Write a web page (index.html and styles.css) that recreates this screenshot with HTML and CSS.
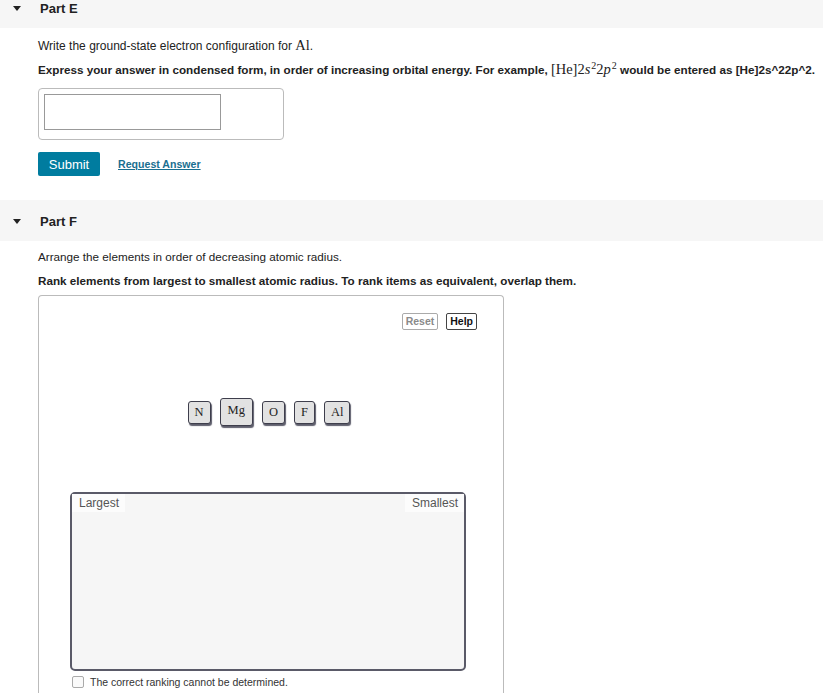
FILE: index.html
```html
<!DOCTYPE html>
<html>
<head>
<meta charset="utf-8">
<link rel="stylesheet" href="styles.css">
</head>
<body>
<section class="part part-first">
  <div class="part-head"><span class="caret"></span><span class="part-title">Part E</span></div>
  <div class="part-body">
    <p class="prompt">Write the ground-state electron configuration for <span class="math">Al</span>.</p>
    <p class="instr">Express your answer in condensed form, in order of increasing orbital energy. For example, <span class="math mb">[He]2<i>s</i><sup>2</sup>2<i>p</i><sup>2</sup></span> would be entered as [He]2s^22p^2.</p>
    <div class="answer-box"><div class="answer-input"></div></div>
    <div class="actions">
      <button class="submit">Submit</button>
      <a class="req" href="#">Request Answer</a>
    </div>
  </div>
</section>
<section class="part">
  <div class="part-head"><span class="caret"></span><span class="part-title">Part F</span></div>
  <div class="part-body">
    <p class="prompt prompt-f">Arrange the elements in order of decreasing atomic radius.</p>
    <p class="instr instr-f">Rank elements from largest to smallest atomic radius. To rank items as equivalent, overlap them.</p>
    <div class="rank">
      <div class="rank-tools">
        <button class="tool tool-reset">Reset</button>
        <button class="tool tool-help">Help</button>
      </div>
      <div class="tiles">
        <span class="tile">N</span>
        <span class="tile tile-big">Mg</span>
        <span class="tile">O</span>
        <span class="tile">F</span>
        <span class="tile">Al</span>
      </div>
      <div class="drop">
        <span class="lbl">Largest</span>
        <span class="lbl">Smallest</span>
      </div>
      <label class="cant"><span class="cb"></span>The correct ranking cannot be determined.</label>
    </div>
  </div>
</section>
</body>
</html>
```
FILE: styles.css
```css
html, body {
  margin: 0;
  padding: 0;
  background: #fff;
  font-family: "Liberation Sans", Arial, Helvetica, sans-serif;
  color: #222;
  overflow: hidden;
}
.part-first {
  margin-top: -13px;
}
.part-head {
  height: 41px;
  box-sizing: border-box;
  padding-top: 2px;
  background: #f6f6f6;
  display: flex;
  align-items: center;
}
.caret {
  width: 0;
  height: 0;
  border-left: 4px solid transparent;
  border-right: 4px solid transparent;
  border-top: 5px solid #222;
  margin-left: 13px;
  margin-right: 19px;
}
.part-title {
  font-size: 13px;
  font-weight: bold;
  color: #222;
}
.part-body {
  padding-left: 38px;
}
.prompt {
  margin: 0;
  font-size: 12px;
  line-height: 16px;
  height: 16px;
  padding-top: 10px;
}
.math {
  font-family: "Liberation Serif", "Times New Roman", serif;
  font-size: 14.5px;
  font-weight: normal;
  line-height: 10px;
}
.math sup {
  font-size: 10px;
  line-height: 0;
  vertical-align: 5px;
}
.math i {
  padding-right: 1px;
}
.instr {
  margin: 0;
  font-size: 11.7px;
  font-weight: bold;
  line-height: 16px;
  height: 16px;
  padding-top: 8px;
}
.answer-box {
  margin-top: 10px;
  width: 244px;
  height: 50px;
  border: 1px solid #bbb;
  border-radius: 4px;
  display: flex;
}
.answer-input {
  margin: 5px 0 0 5px;
  width: 175px;
  height: 34px;
  border: 1px solid #999;
}
.actions {
  margin-top: 12px;
  display: flex;
  align-items: center;
  gap: 18px;
  padding-bottom: 24px;
}
.submit {
  width: 62px;
  height: 24px;
  background: #007c9f;
  color: #fff;
  border: none;
  border-radius: 2px;
  font-family: "Liberation Sans", Arial, sans-serif;
  font-size: 13px;
  padding: 0;
}
.req {
  color: #1a6f90;
  font-weight: bold;
  font-size: 10.6px;
  text-decoration: underline;
}
.prompt-f {
  font-size: 11.7px;
  padding-top: 8px;
}
.instr-f {
  padding-top: 8px;
}
.rank {
  margin-top: 6px;
  width: 464px;
  border: 1px solid #bbb;
  border-bottom: none;
  border-radius: 4px 4px 0 0;
  padding-bottom: 10px;
}
.rank-tools {
  display: flex;
  justify-content: flex-end;
  gap: 8px;
  padding: 17px 26px 0 0;
}
.tool {
  height: 17px;
  padding: 0 3px;
  background: #fff;
  border: 1px solid #888;
  border-radius: 2px;
  font-family: "Liberation Sans", Arial, sans-serif;
  font-size: 10.5px;
  font-weight: bold;
  line-height: 15px;
}
.tool-reset {
  color: #8a8a8a;
  border-color: #aaa;
}
.tool-help {
  color: #111;
  border-color: #444;
}
.tiles {
  display: flex;
  justify-content: center;
  align-items: center;
  gap: 9px;
  margin-top: 66px;
  height: 32px;
  padding-right: 4px;
}
.tile {
  font-family: "Liberation Serif", "Times New Roman", serif;
  font-size: 12.5px;
  color: #222;
  background: #e2e2e2;
  border: 1px solid #3e3e4c;
  border-radius: 3px;
  height: 21px;
  line-height: 21px;
  padding: 0 6px;
  box-shadow: 1px 2px 1px 0 #5e5e6c;
}
.tile-big {
  height: 26px;
  line-height: 22px;
  padding: 0 7px;
}
.drop {
  margin: 64px 0 0 31px;
  width: 392px;
  height: 175px;
  border: 2px solid #5a5a68;
  border-radius: 5px;
  background: #f6f6f6;
  display: flex;
  justify-content: space-between;
  align-items: flex-start;
}
.lbl {
  background: #fcfcfc;
  color: #555;
  font-size: 12px;
  line-height: 16px;
  padding: 1px 6px 1px 7px;
}
.cant {
  display: flex;
  align-items: center;
  margin: 5px 0 0 33px;
  font-size: 10.5px;
  color: #333;
}
.cb {
  width: 10px;
  height: 10px;
  border: 1px solid #aaa;
  border-radius: 2px;
  background: #fafafa;
  margin-right: 6px;
}
```
